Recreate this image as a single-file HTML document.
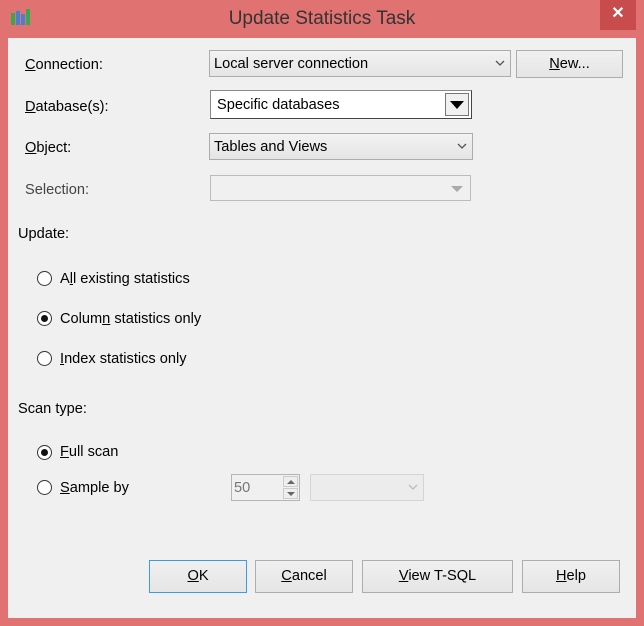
<!DOCTYPE html><html><head><style>
body{margin:0;width:644px;height:626px;background:#e07272;font-family:"Liberation Sans",sans-serif;font-size:14.6px;color:#000;position:relative;overflow:hidden}
.a{position:absolute;box-sizing:border-box}
.client{left:8px;top:38px;width:628px;height:580px;background:#f0f0f0}
.lbl{position:absolute;white-space:nowrap}
.cb{background:linear-gradient(#f2f2f2,#e5e5e5);border:1px solid #acacac}
.btn{background:linear-gradient(#f0f0f0,#e5e5e5);border:1px solid #adadad;text-align:center;line-height:31px}
.rad{width:15px;height:15px;border:1px solid #333;border-radius:50%;background:#fff}
.rad.on::after{content:"";position:absolute;left:3px;top:3px;width:7px;height:7px;border-radius:50%;background:#111}
u{text-decoration:underline}
svg.chev{position:absolute;right:5px;top:9px}
</style></head><body>
<div class="a" style="left:600px;top:0;width:36px;height:30px;background:#c84c4c;color:#fff;text-align:center;line-height:28px;font-size:16px;font-weight:bold">✕</div>
<div class="a" style="left:10px;top:8px;width:22px;height:18px">
<div class="a" style="left:1px;top:5px;width:4px;height:12px;background:#3aa84a"></div>
<div class="a" style="left:6px;top:3px;width:4px;height:14px;background:#4a7fd0"></div>
<div class="a" style="left:11px;top:6px;width:4px;height:11px;background:#4a7fd0"></div>
<div class="a" style="left:16px;top:1px;width:4px;height:16px;background:#3aa84a"></div>
</div>
<div class="lbl" style="left:0;width:644px;text-align:center;top:8px;font-size:19px;color:#333">Update Statistics Task</div>
<div class="a client"></div>
<div class="lbl" style="left:25px;top:57px"><u>C</u>onnection:</div>
<div class="a cb" style="left:209px;top:50px;width:302px;height:27px"><span class="lbl" style="left:4px;top:5px">Local server connection</span><svg class="chev" width="10" height="7"><path d="M1 1L5 5L9 1" fill="none" stroke="#555" stroke-width="1.3"/></svg></div>
<div class="a btn" style="left:516px;top:50px;width:107px;height:28px;line-height:26px"><u>N</u>ew...</div>
<div class="lbl" style="left:25px;top:99px"><u>D</u>atabase(s):</div>
<div class="a" style="left:210px;top:90px;width:262px;height:29px;background:#fff;border:1px solid #888;border-right-color:#444;border-bottom-color:#444"><span class="lbl" style="left:6px;top:6px">Specific databases</span><div class="a" style="right:2px;top:2px;width:24px;height:23px;background:#f0f0f0;border:1px solid #777"><div class="a" style="left:4px;top:7px;border-left:7px solid transparent;border-right:7px solid transparent;border-top:8px solid #000"></div></div></div>
<div class="lbl" style="left:25px;top:140px"><u>O</u>bject:</div>
<div class="a cb" style="left:209px;top:133px;width:264px;height:27px"><span class="lbl" style="left:4px;top:5px">Tables and Views</span><svg class="chev" width="10" height="7"><path d="M1 1L5 5L9 1" fill="none" stroke="#555" stroke-width="1.3"/></svg></div>
<div class="lbl" style="left:25px;top:182px;color:#444">Selection:</div>
<div class="a" style="left:210px;top:175px;width:261px;height:26px;background:#f0f0f0;border:1px solid #bbb"><div class="a" style="right:7px;top:10px;border-left:6px solid transparent;border-right:6px solid transparent;border-top:6px solid #aaa"></div></div>
<div class="lbl" style="left:18px;top:226px">Update:</div>
<div class="a rad" style="left:37px;top:271px"></div><div class="lbl" style="left:60px;top:271px">A<u>l</u>l existing statistics</div>
<div class="a rad on" style="left:37px;top:311px"></div><div class="lbl" style="left:60px;top:311px">Colum<u>n</u> statistics only</div>
<div class="a rad" style="left:37px;top:351px"></div><div class="lbl" style="left:60px;top:351px"><u>I</u>ndex statistics only</div>
<div class="lbl" style="left:18px;top:401px">Scan type:</div>
<div class="a rad on" style="left:37px;top:445px"></div><div class="lbl" style="left:60px;top:444px"><u>F</u>ull scan</div>
<div class="a rad" style="left:37px;top:480px"></div><div class="lbl" style="left:60px;top:480px"><u>S</u>ample by</div>
<div class="a" style="left:231px;top:474px;width:69px;height:27px;border:1px solid #b5b5b5;background:#f0f0f0"><span class="lbl" style="left:2px;top:5px;color:#777">50</span>
<div class="a" style="left:51px;top:1px;width:15px;height:11px;border:1px solid #ccc;background:#eee"><div class="a" style="left:3px;top:3px;border-left:4px solid transparent;border-right:4px solid transparent;border-bottom:4px solid #666"></div></div>
<div class="a" style="left:51px;top:13px;width:15px;height:11px;border:1px solid #ccc;background:#eee"><div class="a" style="left:3px;top:3px;border-left:4px solid transparent;border-right:4px solid transparent;border-top:4px solid #666"></div></div></div>
<div class="a" style="left:310px;top:474px;width:114px;height:27px;border:1px solid #d5d5d5;background:#ececec"><svg class="chev" width="10" height="7"><path d="M1 1L5 5L9 1" fill="none" stroke="#bbb" stroke-width="1.3"/></svg></div>
<div class="a btn" style="left:149px;top:560px;width:98px;height:33px;border-color:#3c9ae8"><u>O</u>K</div>
<div class="a btn" style="left:255px;top:560px;width:98px;height:33px"><u>C</u>ancel</div>
<div class="a btn" style="left:362px;top:560px;width:151px;height:33px"><u>V</u>iew T-SQL</div>
<div class="a btn" style="left:522px;top:560px;width:98px;height:33px"><u>H</u>elp</div>
</body></html>
